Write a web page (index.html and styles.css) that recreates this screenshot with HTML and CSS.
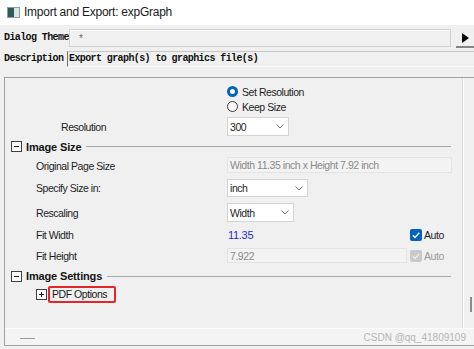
FILE: index.html
```html
<!DOCTYPE html>
<html>
<head>
<meta charset="utf-8">
<link rel="stylesheet" href="styles.css">
</head>
<body>
<div class="title">
  <svg viewBox="0 0 13 11" class="appicon"><rect x="0.5" y="0.5" width="12" height="10" fill="#dde4e8" stroke="#8b9ea9"/><rect x="1" y="1" width="6" height="9" fill="#2f5c58"/></svg>
  <span>Import and Export: expGraph</span>
</div>
<div class="themerow">
  <span class="mlabel theme">Dialog Theme</span>
  <div class="themebox">*</div>
  <div class="arrowbtn"><svg viewBox="0 0 7 10" class="tri"><path d="M0 0 L7 5 L0 10 Z" fill="#000"/></svg></div>
</div>
<div class="descrow">
  <span class="mlabel desc">Description</span>
  <div class="descbox">Export graph(s) to graphics file(s)</div>
</div>
<div class="panel">
  <div class="pmain">
    <div class="content">
      <div class="row r-radio first">
        <div class="lab"></div>
        <div class="radio"><span class="rb on"></span><span>Set Resolution</span></div>
      </div>
      <div class="row r-radio">
        <div class="lab"></div>
        <div class="radio"><span class="rb"></span><span>Keep Size</span></div>
      </div>
      <div class="row r-res">
        <div class="lab indent2">Resolution</div>
        <div class="dd w62 h19"><span>300</span><svg viewBox="0 0 8 5" class="chev"><path d="M0.5 0.5 L4 4 L7.5 0.5" fill="none" stroke="#707070"/></svg></div>
      </div>
      <div class="sec s1">
        <span class="tbox"><span class="hl"></span></span>
        <span class="sectext">Image Size</span>
        <span class="secline"></span>
      </div>
      <div class="row r-orig">
        <div class="lab">Original Page Size</div>
        <div class="dis w225 h16">Width 11.35 inch x Height 7.92 inch</div>
      </div>
      <div class="row r-spec">
        <div class="lab">Specify Size in:</div>
        <div class="dd w81 h18"><span>inch</span><svg viewBox="0 0 8 5" class="chev"><path d="M0.5 0.5 L4 4 L7.5 0.5" fill="none" stroke="#707070"/></svg></div>
      </div>
      <div class="row r-resc">
        <div class="lab">Rescaling</div>
        <div class="dd w67 h19"><span>Width</span><svg viewBox="0 0 8 5" class="chev"><path d="M0.5 0.5 L4 4 L7.5 0.5" fill="none" stroke="#707070"/></svg></div>
      </div>
      <div class="row r-fw">
        <div class="lab">Fit Width</div>
        <div class="fwval">11.35</div>
        <span class="cb on"><svg viewBox="0 0 12 12"><path d="M2.8 6.2 L5 8.4 L9.3 3.8" fill="none" stroke="#fff" stroke-width="1.4"/></svg></span>
        <span class="auto">Auto</span>
      </div>
      <div class="row r-fh">
        <div class="lab">Fit Height</div>
        <div class="dis w180 h15">7.922</div>
        <span class="cb off"><svg viewBox="0 0 12 12"><path d="M2.8 6.2 L5 8.4 L9.3 3.8" fill="none" stroke="#ececec" stroke-width="1.4"/></svg></span>
        <span class="auto grey">Auto</span>
      </div>
      <div class="sec s2">
        <span class="tbox"><span class="hl"></span></span>
        <span class="sectext">Image Settings</span>
        <span class="secline"></span>
      </div>
      <div class="row r-pdf">
        <span class="tbox"><span class="hl"></span><span class="vl"></span></span>
        <span class="pdf">PDF Options</span>
      </div>
    </div>
    <div class="vscroll"><span class="thumb"></span></div>
  </div>
  <div class="pfoot">
    <span class="dash"></span>
    <span class="wm">CSDN @qq_41809109</span>
  </div>
</div>
</body>
</html>
```
FILE: styles.css
```css
* { box-sizing: border-box; margin: 0; padding: 0; }
html, body { width: 474px; height: 349px; overflow: hidden; }
body {
  background: #f0f0f0;
  font-family: "Liberation Sans", Arial, sans-serif;
  font-size: 10.5px;
  letter-spacing: -0.45px;
  color: #1e1e1e;
}

.title {
  height: 25px;
  background: #fff;
  display: flex;
  align-items: center;
  padding: 0 0 1px 7px;
  gap: 4px;
  font-size: 12px;
  letter-spacing: -0.25px;
  color: #1a1a1a;
}
.appicon { display: block; width: 13px; height: 11px; }

.mlabel {
  font-family: "Liberation Mono", "DejaVu Sans Mono", monospace;
  font-size: 10px;
  font-weight: bold;
  letter-spacing: -0.6px;
  color: #111;
  padding-left: 4px;
}
.themerow { display: flex; align-items: flex-start; padding-top: 4px; height: 22px; }
.mlabel.theme { width: 69px; line-height: 18px; }
.themebox {
  flex: 1;
  height: 18px;
  border: 1px solid #d0d0d0;
  box-shadow: inset 1px 1px 0 #fafafa;
  font-family: "Liberation Mono", monospace;
  font-size: 10px;
  letter-spacing: 0;
  color: #6a6a6a;
  line-height: 20px;
  padding-left: 8px;
}
.arrowbtn {
  width: 18px;
  height: 19px;
  margin-left: 5px;
  border-bottom: 2px solid #858585;
  display: flex;
  align-items: center;
  justify-content: center;
}
.tri { display: block; width: 7px; height: 10px; margin-left: 1px; }

.descrow { display: flex; margin-top: 4px; height: 16px; }
.mlabel.desc { width: 67px; line-height: 15px; }
.descbox {
  flex: 1;
  border-top: 1px solid #c6c6c6;
  border-left: 1px solid #707070;
  border-bottom: 1px solid #fbfbfb;
  font-family: "Liberation Mono", monospace;
  font-size: 10px;
  font-weight: bold;
  letter-spacing: -0.6px;
  color: #111;
  line-height: 14px;
  padding-left: 1px;
}

.panel {
  margin: 10px 0 0 4px;
  height: 269px;
  border: 1px solid #a0a0a0;
  border-right: none;
}
.pmain { display: flex; height: 250px; }
.content {
  width: 458px;
  border-right: 1px solid #dcdcdc;
  display: flex;
  flex-direction: column;
}
.vscroll { flex: 1; position: relative; border-left: 1px solid #fafafa; }
.thumb {
  position: absolute;
  left: 6px;
  top: 219px;
  width: 2px;
  height: 15px;
  background: #8a8a8a;
}
.pfoot {
  height: 17px;
  background: #f4f4f4;
  border-top: 1px solid #fbfbfb;
  display: flex;
  align-items: center;
  justify-content: space-between;
  padding: 0 8px 0 15px;
}
.dash { width: 15px; height: 1px; background: #9a9a9a; margin-top: 2px; }
.wm { font-size: 10px; letter-spacing: 0; color: #b4b4b4; }

.row { display: flex; align-items: center; }
.lab { width: 222px; padding-left: 31px; flex: none; }
.lab.indent2 { padding-left: 56px; }

.first { margin-top: 6px; }
.r-radio { height: 15px; }
.radio { display: flex; align-items: center; gap: 4px; }
.rb {
  width: 11px; height: 11px;
  border-radius: 50%;
  border: 1px solid #3a3a3a;
  background: #fbfbfb;
  flex: none;
}
.rb.on {
  border: 3.5px solid #0063c0;
  background: #fff;
}

.r-res { margin-top: 3px; height: 19px; }
.dd {
  display: flex;
  align-items: center;
  justify-content: space-between;
  background: #fff;
  border: 1px solid #d4d4d4;
  padding: 0 4px 0 2px;
}
.chev { display: block; width: 8px; height: 5px; }
.w62 { width: 62px; } .w67 { width: 67px; } .w81 { width: 81px; }
.w225 { width: 225px; } .w180 { width: 180px; }
.h19 { height: 19px; } .h18 { height: 18px; } .h16 { height: 16px; } .h15 { height: 15px; }

.dis {
  display: flex;
  align-items: center;
  background: #f3f3f3;
  border: 1px solid #e3e3e3;
  color: #8a8a8a;
  padding-left: 2px;
}

.sec {
  display: flex;
  align-items: center;
  padding: 0 11px 0 6px;
  height: 21px;
}
.tbox {
  position: relative;
  width: 11px; height: 11px;
  border: 1px solid #404040;
  background: #fafafa;
  flex: none;
}
.tbox .hl { position: absolute; left: 2px; top: 4px; width: 5px; height: 1px; background: #202020; }
.tbox .vl { position: absolute; left: 4px; top: 2px; width: 1px; height: 5px; background: #202020; }
.sectext { font-weight: bold; font-size: 11px; letter-spacing: -0.15px; margin-left: 4px; color: #141414; }
.secline { flex: 1; height: 1px; background: #a8a8a8; margin-left: 5px; }

.r-orig { height: 16px; }
.r-orig .lab { padding-top: 2px; }
.r-spec { margin-top: 6px; height: 18px; }
.r-resc { margin-top: 6px; height: 19px; }
.r-fw { height: 25px; }
.fwval { width: 183px; color: #2b2bc8; padding-left: 1px; font-size: 11px; letter-spacing: -0.3px; }
.cb {
  width: 12px; height: 12px;
  border-radius: 2px;
  flex: none;
  margin-right: 2px;
}
.cb svg { display: block; width: 12px; height: 12px; }
.cb.on { background: #0063c0; }
.cb.off { background: #c9c9c9; margin-left: 3px; }
.auto { color: #1e1e1e; }
.auto.grey { color: #9a9a9a; }
.r-fh { margin-top: 1px; height: 15px; }
.s2 { margin-top: 3px; height: 20px; }

.r-pdf { height: 17px; padding-left: 31px; }
.pdf {
  margin-left: 1px;
  border: 2px solid #e3262a;
  border-radius: 2px;
  height: 17px;
  line-height: 13px;
  padding: 0 7px 0 2px;
  color: #1a1a1a;
}
```
